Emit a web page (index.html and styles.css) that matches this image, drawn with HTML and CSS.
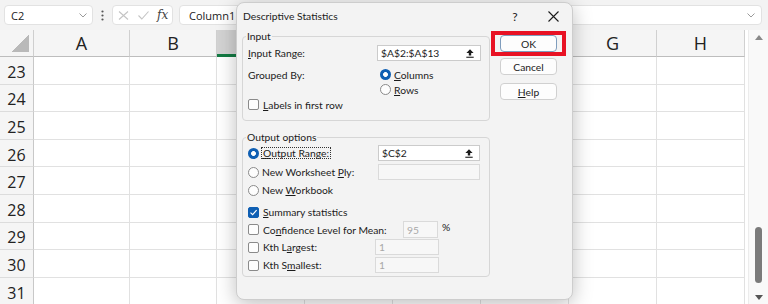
FILE: index.html
```html
<!DOCTYPE html>
<html lang="en">
<head>
<meta charset="utf-8">
<title>Descriptive Statistics</title>
<link rel="stylesheet" href="styles.css">
</head>
<body>
<div class="screen">
  <div class="formula-bar">
    <div class="namebox"><span>C2</span>
      <svg class="chev" width="8" height="5" viewBox="0 0 8 5"><path d="M0.5 0.5 L4 4 L7.5 0.5" fill="none" stroke="#9a9a9a" stroke-width="1"/></svg>
    </div>
    <div class="dots"><svg width="3" height="11" viewBox="0 0 3 11"><circle cx="1.5" cy="1.5" r="1.1" fill="#555"/><circle cx="1.5" cy="5.5" r="1.1" fill="#555"/><circle cx="1.5" cy="9.5" r="1.1" fill="#555"/></svg></div>
    <div class="fx-box">
      <svg width="11" height="9" viewBox="0 0 11 9"><path d="M1 0.5 L10 8.5 M10 0.5 L1 8.5" stroke="#c4c4c4" stroke-width="1.1" fill="none"/></svg>
      <svg width="11" height="9" viewBox="0 0 11 9"><path d="M0.5 4.5 L3.8 8 L10.5 0.5" stroke="#c4c4c4" stroke-width="1.1" fill="none"/></svg>
      <span class="fx">fx</span>
    </div>
    <div class="formula-input"><span>Column1</span>
      <svg class="chev" width="8" height="5" viewBox="0 0 8 5"><path d="M0.5 0.5 L4 4 L7.5 0.5" fill="none" stroke="#9a9a9a" stroke-width="1"/></svg>
    </div>
  </div>

  <div class="sheet">
    <div class="cells">
      <div class="corner"><span class="tri"></span></div>
      <div class="ch">A</div><div class="ch">B</div><div class="ch sel">C</div><div class="ch">D</div><div class="ch">E</div><div class="ch">F</div><div class="ch">G</div><div class="ch">H</div>

      <div class="rh">23</div><div class="c"></div><div class="c"></div><div class="c"></div><div class="c"></div><div class="c"></div><div class="c"></div><div class="c"></div><div class="c"></div>
      <div class="rh">24</div><div class="c"></div><div class="c"></div><div class="c"></div><div class="c"></div><div class="c"></div><div class="c"></div><div class="c"></div><div class="c"></div>
      <div class="rh">25</div><div class="c"></div><div class="c"></div><div class="c"></div><div class="c"></div><div class="c"></div><div class="c"></div><div class="c"></div><div class="c"></div>
      <div class="rh">26</div><div class="c"></div><div class="c"></div><div class="c"></div><div class="c"></div><div class="c"></div><div class="c"></div><div class="c"></div><div class="c"></div>
      <div class="rh">27</div><div class="c"></div><div class="c"></div><div class="c"></div><div class="c"></div><div class="c"></div><div class="c"></div><div class="c"></div><div class="c"></div>
      <div class="rh">28</div><div class="c"></div><div class="c"></div><div class="c"></div><div class="c"></div><div class="c"></div><div class="c"></div><div class="c"></div><div class="c"></div>
      <div class="rh">29</div><div class="c"></div><div class="c"></div><div class="c"></div><div class="c"></div><div class="c"></div><div class="c"></div><div class="c"></div><div class="c"></div>
      <div class="rh">30</div><div class="c"></div><div class="c"></div><div class="c"></div><div class="c"></div><div class="c"></div><div class="c"></div><div class="c"></div><div class="c"></div>
      <div class="rh">31</div><div class="c"></div><div class="c"></div><div class="c"></div><div class="c"></div><div class="c"></div><div class="c"></div><div class="c"></div><div class="c"></div>
    </div>
    <div class="vscroll">
      <span class="arrow-up"></span>
      <span class="spacer"></span>
      <span class="thumb"></span>
      <span class="arrow-down"></span>
    </div>
  </div>

  <div class="dialog">
    <div class="titlebar">
      <span class="title">Descriptive Statistics</span>
      <span class="tb-btn help-q">?</span>
      <span class="tb-btn close"><svg width="11" height="11" viewBox="0 0 11 11"><path d="M0.5 0.5 L10.5 10.5 M10.5 0.5 L0.5 10.5" stroke="#1b1b1b" stroke-width="1.1" fill="none"/></svg></span>
    </div>
    <div class="dbody">
      <div class="groups">
        <fieldset class="grp grp-in">
          <legend>Input</legend>
          <div class="row r-range">
            <span class="lbl"><u>I</u>nput Range:</span>
            <div class="tb"><span class="val">$A$2:$A$13</span><svg class="up" width="8" height="9" viewBox="0 0 8 9"><path d="M4 0.3 L7.6 4 H5.2 V6.6 H2.8 V4 H0.4 Z" fill="#1b1b1b"/><rect x="0.3" y="7.7" width="7.4" height="1.1" fill="#1b1b1b"/></svg></div>
          </div>
          <div class="row r-grouped">
            <span class="lbl lbl-g">Grouped By:</span>
            <span class="opt"><i class="radio on"></i><span><u>C</u>olumns</span></span>
          </div>
          <div class="row">
            <span class="lbl lbl-g"></span>
            <span class="opt"><i class="radio"></i><span><u>R</u>ows</span></span>
          </div>
          <div class="row">
            <span class="opt"><i class="chk"></i><span><u>L</u>abels in first row</span></span>
          </div>
        </fieldset>

        <fieldset class="grp grp-out">
          <legend>Output options</legend>
          <div class="row r-orange">
            <span class="lbl lbl-o"><span class="opt"><i class="radio on"></i><span class="focus"><u>O</u>utput Range:</span></span></span>
            <div class="tb tb-o"><span class="val">$C$2</span><svg class="up" width="8" height="9" viewBox="0 0 8 9"><path d="M4 0.3 L7.6 4 H5.2 V6.6 H2.8 V4 H0.4 Z" fill="#1b1b1b"/><rect x="0.3" y="7.7" width="7.4" height="1.1" fill="#1b1b1b"/></svg></div>
          </div>
          <div class="row r-ply">
            <span class="lbl lbl-o"><span class="opt"><i class="radio"></i><span>New Worksheet <u>P</u>ly:</span></span></span>
            <div class="tb tb-o dis"></div>
          </div>
          <div class="row r-wb">
            <span class="opt"><i class="radio"></i><span>New <u>W</u>orkbook</span></span>
          </div>
          <div class="row r-sum">
            <span class="opt"><i class="chk on"><svg width="9" height="9" viewBox="0 0 9 9"><path d="M1.5 4.6 L3.6 6.6 L7.6 2.2" stroke="#fff" stroke-width="1.2" fill="none"/></svg></i><span><u>S</u>ummary statistics</span></span>
          </div>
          <div class="row r-conf">
            <span class="lbl lbl-c"><span class="opt"><i class="chk"></i><span>Co<u>n</u>fidence Level for Mean:</span></span></span>
            <div class="tb tb-c dis"><span class="val">95</span></div>
            <span class="pct">%</span>
          </div>
          <div class="row r-kl">
            <span class="lbl lbl-k"><span class="opt"><i class="chk"></i><span>Kth L<u>a</u>rgest:</span></span></span>
            <div class="tb tb-k dis"><span class="val">1</span></div>
          </div>
          <div class="row r-ks">
            <span class="lbl lbl-k"><span class="opt"><i class="chk"></i><span>Kth S<u>m</u>allest:</span></span></span>
            <div class="tb tb-k dis"><span class="val">1</span></div>
          </div>
        </fieldset>
      </div>

      <div class="buttons">
        <div class="hl"><button class="btn default">OK</button></div>
        <button class="btn b-cancel">Cancel</button>
        <button class="btn b-help"><span><u>H</u>elp</span></button>
      </div>
    </div>
  </div>
</div>
</body>
</html>
```

FILE: styles.css
```css
html, body {
  margin: 0;
  padding: 0;
}
body {
  width: 768px;
  height: 304px;
  overflow: hidden;
  background: #ffffff;
  font-family: "Open Sans", "Noto Sans", sans-serif;
  color: #1f1f1f;
}
.screen {
  position: relative;
  width: 768px;
  height: 304px;
  overflow: hidden;
  display: flex;
  flex-direction: column;
}

/* ---------- formula bar ---------- */
.formula-bar {
  height: 30px;
  flex: none;
  box-sizing: border-box;
  background: #f3f3f3;
  display: flex;
  align-items: center;
  padding: 0 6px 0 4px;
}
.namebox {
  width: 89px;
  height: 20px;
  box-sizing: border-box;
  background: #fff;
  border: 1px solid #e2e2e2;
  border-radius: 4px;
  display: flex;
  align-items: center;
  justify-content: space-between;
  padding: 0 5px 0 6px;
  font-size: 11px;
  color: #222;
}
.dots {
  width: 19px;
  display: flex;
  justify-content: center;
  align-items: center;
}
.fx-box {
  width: 61px;
  height: 20px;
  box-sizing: border-box;
  background: #fff;
  border: 1px solid #e2e2e2;
  border-radius: 4px;
  display: flex;
  align-items: center;
  padding-left: 5px;
  gap: 9px;
}
.fx {
  font-family: "DejaVu Serif", "Liberation Serif", serif;
  font-style: italic;
  font-size: 12px;
  color: #444;
  margin-left: -1px;
}
.formula-input {
  flex: 1;
  margin-left: 6px;
  height: 20px;
  box-sizing: border-box;
  background: #fff;
  border: 1px solid #e2e2e2;
  border-radius: 4px;
  display: flex;
  align-items: center;
  justify-content: space-between;
  padding: 0 6px 0 9px;
  font-size: 11px;
  color: #222;
}

/* ---------- sheet ---------- */
.sheet {
  flex: 1;
  display: flex;
  min-height: 0;
}
.cells {
  width: 745px;
  flex: none;
  display: grid;
  grid-template-columns: 34px 96px 87px repeat(6, 88px);
  grid-template-rows: 27px repeat(9, 27.6px);
}
.cells > div {
  box-sizing: border-box;
}
.corner {
  background: #f5f5f5;
  border-right: 1px solid #cfcfcf;
  border-bottom: 1px solid #bdbdbd;
  display: flex;
  align-items: flex-end;
  justify-content: flex-end;
  padding: 0 4px 4px 0;
}
.tri {
  width: 18px;
  height: 18px;
  background: linear-gradient(135deg, transparent 50%, #b9b9b9 50%);
}
.ch {
  background: #f5f5f5;
  border-right: 1px solid #d0d0d0;
  border-bottom: 1px solid #bdbdbd;
  display: flex;
  align-items: center;
  justify-content: center;
  font-size: 18px;
  color: #222;
}
.ch.sel {
  background: #d3d3d3;
  border-bottom: 3px solid #137a43;
}
.rh {
  background: #f5f5f5;
  border-right: 1px solid #c8c8c8;
  border-bottom: 1px solid #dcdcdc;
  display: flex;
  align-items: center;
  justify-content: center;
  padding-top: 3px;
  font-size: 16px;
  color: #222;
}
.c {
  border-right: 1px solid #e1e1e1;
  border-bottom: 1px solid #e1e1e1;
}
.vscroll {
  width: 20px;
  margin-left: 3px;
  box-sizing: border-box;
  background: #f9f9f9;
  border-left: 1px solid #ececec;
  display: flex;
  flex-direction: column;
  align-items: center;
}
.arrow-up {
  margin-top: 5px;
  width: 0;
  height: 0;
  border-left: 4px solid transparent;
  border-right: 4px solid transparent;
  border-bottom: 5px solid #8a8a8a;
}
.spacer { flex: 1; }
.thumb {
  width: 7px;
  height: 56px;
  border-radius: 4px;
  background: #7a7a7a;
  margin-bottom: 12px;
}
.arrow-down {
  margin-bottom: 4px;
  width: 0;
  height: 0;
  border-left: 4px solid transparent;
  border-right: 4px solid transparent;
  border-top: 5px solid #555;
}

/* ---------- dialog ---------- */
.dialog {
  position: absolute;
  left: 236px;
  top: 2px;
  width: 337px;
  height: 298px;
  box-sizing: border-box;
  background: #f3f3f3;
  border: 1px solid #cdcdcd;
  border-radius: 8px;
  box-shadow: 0 4px 20px rgba(0, 0, 0, 0.26);
  font-family: "Lato", "Open Sans", sans-serif;
  font-size: 10.3px;
  color: #1b1b1b;
  display: flex;
  flex-direction: column;
}
.dialog u {
  text-underline-offset: 1px;
  text-decoration-thickness: 1px;
}
.titlebar {
  height: 26px;
  flex: none;
  display: flex;
  align-items: center;
  padding-left: 6px;
}
.title {
  flex: 1;
  font-size: 10.3px;
}
.tb-btn {
  width: 20px;
  display: flex;
  justify-content: center;
  align-items: center;
}
.help-q {
  margin-right: 18px;
  font-size: 12px;
}
.close {
  margin-right: 9px;
}
.dbody {
  flex: 1;
  display: flex;
  padding: 0 6px 0 5px;
}
.groups {
  width: 248px;
  flex: none;
  display: flex;
  flex-direction: column;
}
.grp {
  margin: 0;
  min-width: 0;
  box-sizing: border-box;
  width: 248px;
  border: 1px solid #d6d6d6;
  border-radius: 4px;
  padding: 0 5px 8px 5px;
}
.grp legend {
  margin-left: -2px;
  padding: 0 1px;
  font-size: 10.3px;
  line-height: 14px;
  height: 14px;
}
.grp-out {
  margin-top: 9px;
  padding-bottom: 3px;
}
.row {
  display: flex;
  align-items: center;
  height: 16px;
}
.lbl {
  width: 129px;
  flex: none;
}
.lbl-g { width: 132px; }
.lbl-o { width: 130px; }
.lbl-c { width: 155px; }
.lbl-k { width: 127px; }
.r-range { margin-top: 2px; }
.r-grouped { margin-top: 6px; }
.grp-in .row:not(.r-range) { height: 15px; }
.r-orange { margin-top: 1px; }
.r-ply { margin-top: 3px; }
.r-wb { margin-top: 2px; }
.r-sum { margin-top: 6px; }
.r-conf { margin-top: 1px; height: 17px; }
.r-kl { margin-top: 1px; }
.r-ks { margin-top: 2px; }

.opt {
  display: flex;
  align-items: center;
}
.radio {
  width: 11px;
  height: 11px;
  box-sizing: border-box;
  border-radius: 50%;
  border: 1px solid #8a8a8a;
  background: #fdfdfd;
  flex: none;
  margin-right: 3px;
}
.radio.on {
  border: none;
  background: radial-gradient(circle, #ffffff 0 2.1px, #0f5fb3 2.7px);
}
.chk {
  width: 11px;
  height: 11px;
  box-sizing: border-box;
  border: 1px solid #8a8a8a;
  border-radius: 2px;
  background: #fdfdfd;
  flex: none;
  margin-right: 4px;
  display: flex;
  align-items: center;
  justify-content: center;
}
.chk.on {
  background: #0f5fb3;
  border-color: #0f5fb3;
}
.focus {
  outline: 1px dotted #333;
  outline-offset: 0;
  line-height: 10px;
  padding: 0 1px;
}
.tb {
  width: 104px;
  height: 16px;
  box-sizing: border-box;
  background: #ffffff;
  border: 1px solid #cbcbcb;
  display: flex;
  align-items: center;
  justify-content: space-between;
  padding: 0 6px 0 3px;
  flex: none;
}
.tb-o { width: 102px; }
.tb-c { width: 35px; height: 17px; }
.tb-k { width: 64px; }
.tb.dis {
  background: #f7f7f7;
  border-color: #dadada;
  color: #a8a8a8;
}
.pct {
  margin-left: 4px;
  margin-top: -6px;
}

/* ---------- buttons ---------- */
.buttons {
  margin-left: 1px;
  display: flex;
  flex-direction: column;
}
.hl {
  margin-top: 2px;
  width: 75px;
  height: 25px;
  box-sizing: border-box;
  border: 4px solid #e81123;
  padding: 0 5px;
  display: flex;
  align-items: center;
}
.btn {
  width: 57px;
  height: 17px;
  box-sizing: border-box;
  border: 1px solid #d0d0d0;
  border-radius: 4px;
  background: #fdfdfd;
  font-family: inherit;
  font-size: 10.3px;
  color: #1b1b1b;
  display: flex;
  align-items: center;
  justify-content: center;
  padding: 0;
}
.btn.default {
  border-color: #7f9dbd;
}
.b-cancel {
  margin: 2px 0 0 9px;
}
.b-help {
  margin: 8px 0 0 9px;
}
```
